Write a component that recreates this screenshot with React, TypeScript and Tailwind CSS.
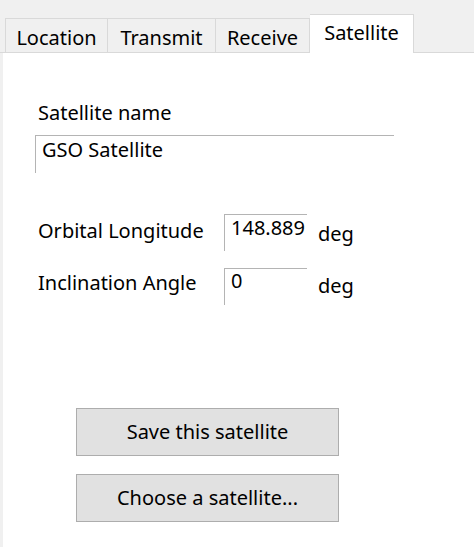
import React from 'react';

const tabs = [
    { label: 'Location', w: 'w-[103px]' },
    { label: 'Transmit', w: 'w-[108px]' },
    { label: 'Receive', w: 'w-[94px]' },
];

const App: React.FC = () => {
    return (
        <div
            className="w-[474px] h-[547px] bg-[#f0f0f0] flex flex-col overflow-hidden text-black text-[20px] leading-[24px]"
            style={{ fontFamily: '"Noto Sans", "Open Sans", sans-serif' }}
        >
            {/* Tab strip */}
            <div className="flex items-end pt-[14px] pl-[5px] border-b border-[#d9d9d9]">
                {tabs.map((t, i) => (
                    <div
                        key={t.label}
                        className={`${t.w} h-[34px] pt-[7px] text-center bg-[#f0f0f0] border-t border-r border-[#d9d9d9] ${i === 0 ? 'border-l' : ''}`}
                    >
                        {t.label}
                    </div>
                ))}
                <div className="w-[104px] h-[39px] -mb-px pt-[6px] text-center bg-white border-t border-r border-[#d9d9d9]">
                    Satellite
                </div>
            </div>

            {/* Panel */}
            <div className="flex-1 ml-[3px] bg-white pl-[32px] pt-[48px]">
                {/* Satellite name */}
                <div className="pl-[3px]">Satellite name</div>
                <div className="mt-[10px] w-[359px] h-[38px] border-t border-l border-[#b4b4b4] pl-[6px] pt-[2px]">
                    GSO Satellite
                </div>

                {/* Orbital Longitude */}
                <div className="mt-[41px] flex items-start h-[37px]">
                    <div className="w-[189px] pl-[3px] mt-[5px]">Orbital Longitude</div>
                    <div className="w-[83px] h-[37px] border-t border-l border-[#b4b4b4] pl-[6px] pt-[1px]">
                        148.889
                    </div>
                    <div className="ml-[11px] mt-[8px]">deg</div>
                </div>

                {/* Inclination Angle */}
                <div className="mt-[17px] flex items-start h-[37px]">
                    <div className="w-[189px] pl-[3px] mt-[3px]">Inclination Angle</div>
                    <div className="w-[83px] h-[37px] border-t border-l border-[#b4b4b4] pl-[6px]">
                        0
                    </div>
                    <div className="ml-[11px] mt-[6px]">deg</div>
                </div>

                {/* Buttons */}
                <div className="mt-[103px] ml-[41px] flex flex-col gap-[18px]">
                    <button
                        type="button"
                        className="w-[263px] h-[48px] bg-[#e1e1e1] border border-[#adadad] text-center"
                    >
                        Save this satellite
                    </button>
                    <button
                        type="button"
                        className="w-[263px] h-[48px] bg-[#e1e1e1] border border-[#adadad] text-center"
                    >
                        Choose a satellite...
                    </button>
                </div>
            </div>
        </div>
    );
};

export default App;
